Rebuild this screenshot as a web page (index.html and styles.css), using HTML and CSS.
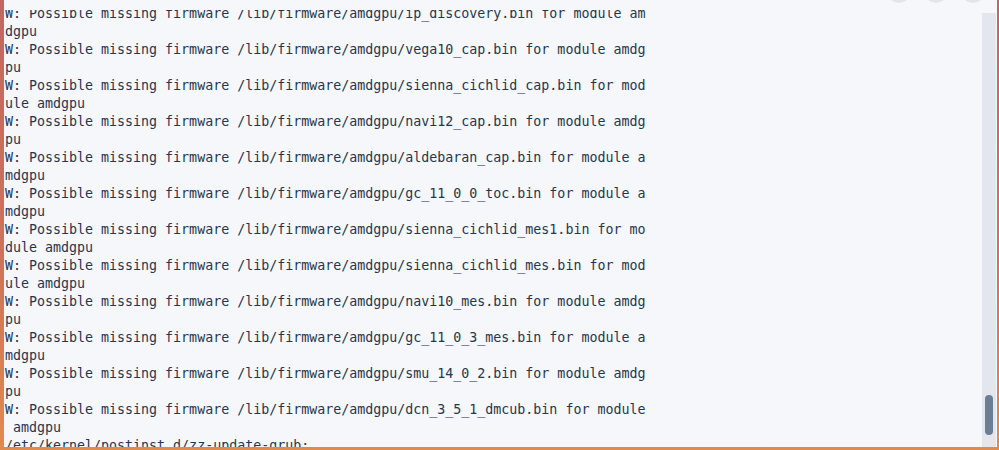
FILE: index.html
```html
<!DOCTYPE html>
<html lang="en">
<head>
  <meta charset="UTF-8">
  <title>Terminal</title>
  <link rel="stylesheet" href="styles.css">
</head>
<body>
  <div class="window">
    <!-- Header bar (mostly scrolled off the top of the shot) -->
    <header class="header">
      <span class="win-btn"></span>
      <span class="win-btn"></span>
      <span class="win-btn"></span>
    </header>

    <div class="term">
      <div class="screen">
<pre class="output">W: Possible missing firmware /lib/firmware/amdgpu/ip_discovery.bin for module am
dgpu
W: Possible missing firmware /lib/firmware/amdgpu/vega10_cap.bin for module amdg
pu
W: Possible missing firmware /lib/firmware/amdgpu/sienna_cichlid_cap.bin for mod
ule amdgpu
W: Possible missing firmware /lib/firmware/amdgpu/navi12_cap.bin for module amdg
pu
W: Possible missing firmware /lib/firmware/amdgpu/aldebaran_cap.bin for module a
mdgpu
W: Possible missing firmware /lib/firmware/amdgpu/gc_11_0_0_toc.bin for module a
mdgpu
W: Possible missing firmware /lib/firmware/amdgpu/sienna_cichlid_mes1.bin for mo
dule amdgpu
W: Possible missing firmware /lib/firmware/amdgpu/sienna_cichlid_mes.bin for mod
ule amdgpu
W: Possible missing firmware /lib/firmware/amdgpu/navi10_mes.bin for module amdg
pu
W: Possible missing firmware /lib/firmware/amdgpu/gc_11_0_3_mes.bin for module a
mdgpu
W: Possible missing firmware /lib/firmware/amdgpu/smu_14_0_2.bin for module amdg
pu
W: Possible missing firmware /lib/firmware/amdgpu/dcn_3_5_1_dmcub.bin for module
 amdgpu
/etc/kernel/postinst.d/zz-update-grub:</pre>
      </div>
      <div class="scrollbar">
        <div class="thumb"></div>
      </div>
    </div>
  </div>
</body>
</html>
```

FILE: styles.css
```css
/* Page / wallpaper */
html, body {
  height: 100%;
}

body {
  margin: 0;
  overflow: hidden;
  background: linear-gradient(to bottom, #c2675f 0%, #cf7458 60%, #e08a4e 100%);
}

/* Terminal window */
.window {
  margin: 0 2px 0 4px;
  height: 447px;
  background-color: #f6f7fb;
  display: flex;
  flex-direction: column;
  overflow: hidden;
}

.header {
  height: 10px;
  flex-shrink: 0;
  box-sizing: border-box;
  padding: 0 12px 7.5px 0;
  display: flex;
  justify-content: flex-end;
  align-items: flex-end;
  gap: 13px;
}

.win-btn {
  width: 24px;
  height: 24px;
  flex-shrink: 0;
  border-radius: 50%;
  background-color: #e3e5ed;
}

/* Terminal body */
.term {
  flex: 1;
  display: flex;
  min-height: 0;
}

.screen {
  flex: 1;
  overflow: hidden;
  padding-left: 1px;
}

.output {
  margin: -5px 0 0 0;
  font-family: "DejaVu Sans Mono", monospace;
  font-size: 13.3px;
  line-height: 18px;
  color: #26364e;
  white-space: pre;
}

.scrollbar {
  width: 14px;
  margin: 3px 1px 0 0;
  background-color: #e3e6ee;
  display: flex;
  flex-direction: column;
  justify-content: flex-end;
  align-items: center;
  padding-bottom: 12px;
  box-sizing: border-box;
}

.thumb {
  width: 8px;
  height: 40px;
  border-radius: 4px;
  background-color: #6a7e96;
}
```
